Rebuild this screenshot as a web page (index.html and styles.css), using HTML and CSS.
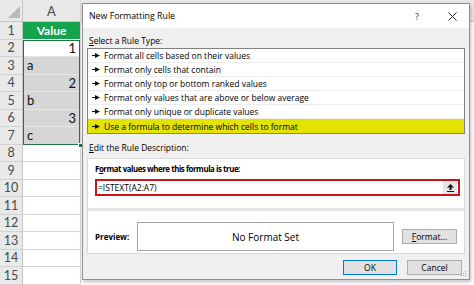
FILE: index.html
```html
<!DOCTYPE html>
<html lang="en">
<head>
    <meta charset="UTF-8">
    <title>New Formatting Rule</title>
    <link rel="stylesheet" href="styles.css">
</head>
<body>
    <div class="sheet">
        <div class="row-heads">
            <div class="corner"><span class="corner-tri"></span></div>
            <div class="rn">1</div>
            <div class="rn">2</div>
            <div class="rn">3</div>
            <div class="rn">4</div>
            <div class="rn">5</div>
            <div class="rn">6</div>
            <div class="rn">7</div>
            <div class="rn">8</div>
            <div class="rn">9</div>
            <div class="rn">10</div>
            <div class="rn">11</div>
            <div class="rn">12</div>
            <div class="rn">13</div>
            <div class="rn">14</div>
            <div class="rn">15</div>
        </div>

        <div class="col-a">
            <div class="col-head">A</div>
            <div class="cell head">Value</div>
            <div class="sel">
                <div class="cell num active">1</div>
                <div class="cell">a</div>
                <div class="cell num">2</div>
                <div class="cell">b</div>
                <div class="cell num">3</div>
                <div class="cell">c</div>
                <span class="handle"></span>
            </div>
            <div class="cell empty"></div>
            <div class="cell empty"></div>
            <div class="cell empty"></div>
            <div class="cell empty"></div>
            <div class="cell empty"></div>
            <div class="cell empty"></div>
            <div class="cell empty"></div>
            <div class="cell empty"></div>
        </div>

        <div class="col-b">
            <div class="col-head">B</div>
        </div>
    </div>

    <div class="dialog">
        <div class="titlebar">
            <span class="title">New Formatting Rule</span>
            <span class="help">?</span>
            <svg class="close" width="9" height="9" viewBox="0 0 9 9">
                <path d="M0.5 0.5L8.5 8.5M8.5 0.5L0.5 8.5" stroke="#222" stroke-width="1" fill="none"/>
            </svg>
        </div>

        <div class="dlg-body">
            <div class="label"><u>S</u>elect a Rule Type:</div>
            <ul class="rule-list">
                <li><svg class="arrow" width="8" height="5" viewBox="0 0 8 5"><path d="M0 2h3v1H0z M3 0l5 2.5L3 5z" fill="#111"/></svg>Format all cells based on their values</li>
                <li><svg class="arrow" width="8" height="5" viewBox="0 0 8 5"><path d="M0 2h3v1H0z M3 0l5 2.5L3 5z" fill="#111"/></svg>Format only cells that contain</li>
                <li><svg class="arrow" width="8" height="5" viewBox="0 0 8 5"><path d="M0 2h3v1H0z M3 0l5 2.5L3 5z" fill="#111"/></svg>Format only top or bottom ranked values</li>
                <li><svg class="arrow" width="8" height="5" viewBox="0 0 8 5"><path d="M0 2h3v1H0z M3 0l5 2.5L3 5z" fill="#111"/></svg>Format only values that are above or below average</li>
                <li><svg class="arrow" width="8" height="5" viewBox="0 0 8 5"><path d="M0 2h3v1H0z M3 0l5 2.5L3 5z" fill="#111"/></svg>Format only unique or duplicate values</li>
                <li class="picked"><svg class="arrow" width="8" height="5" viewBox="0 0 8 5"><path d="M0 2h3v1H0z M3 0l5 2.5L3 5z" fill="#111"/></svg>Use a formula to determine which cells to format</li>
            </ul>

            <div class="label label-edit"><u>E</u>dit the Rule Description:</div>
            <div class="desc">
                <div class="desc-top">
                    <div class="bold rule-label">F<u>o</u>rmat values where this formula is true:</div>
                    <div class="formula">
                        <span>=ISTEXT(A2:A7)</span>
                        <span class="collapse">
                            <svg width="7" height="8" viewBox="0 0 7 8">
                                <path d="M3.5 0L7 3.5H4.5V6h-2V3.5H0z M0 7h7v1H0z" fill="#111"/>
                            </svg>
                        </span>
                    </div>
                </div>
                <div class="desc-bottom">
                    <span class="bold preview-label">Preview:</span>
                    <div class="preview">No Format Set</div>
                    <button class="btn btn-format"><u>F</u>ormat...</button>
                </div>
            </div>

            <div class="actions">
                <button class="btn btn-ok">OK</button>
                <button class="btn btn-cancel">Cancel</button>
            </div>
        </div>

        <svg class="grip" width="6" height="6" viewBox="0 0 6 6">
            <rect x="4" y="0" width="1" height="1" fill="#aaa"/>
            <rect x="2" y="2" width="1" height="1" fill="#aaa"/>
            <rect x="4" y="2" width="1" height="1" fill="#aaa"/>
            <rect x="0" y="4" width="1" height="1" fill="#aaa"/>
            <rect x="2" y="4" width="1" height="1" fill="#aaa"/>
            <rect x="4" y="4" width="1" height="1" fill="#aaa"/>
        </svg>
    </div>
</body>
</html>
```

FILE: styles.css
```css
:root {
    --grid: #d6d6d6;
    --head-bg: #e9e9e9;
    --head-line: #c4c4c4;
    --xl-green: #14a44d;
    --sel-green: #217346;
    --dlg-bg: #f0f0f0;
    --btn-bg: #e1e1e1;
    --btn-line: #adadad;
    --pick: #e2e300;
    --red: #c8141e;
}

* {
    margin: 0;
    padding: 0;
    box-sizing: border-box;
}

body {
    width: 474px;
    height: 285px;
    overflow: hidden;
    background: #fff;
    position: relative;
    font-family: Lato, "Liberation Sans", sans-serif;
}

/* Hoja de calculo */
.sheet {
    display: flex;
    height: 285px;
}

.row-heads {
    width: 23px;
    background: var(--head-bg);
    border-right: 1px solid var(--head-line);
}

.corner {
    height: 22px;
    border-bottom: 1px solid var(--head-line);
    display: flex;
    justify-content: flex-end;
    align-items: flex-end;
    padding: 0 2px 3px 0;
}

.corner-tri {
    width: 0;
    height: 0;
    border-left: 12px solid transparent;
    border-bottom: 12px solid #b9b9b9;
}

.rn {
    height: 17.5px;
    border-bottom: 1px solid #d2d2d2;
    display: flex;
    align-items: center;
    justify-content: center;
    font-size: 12.5px;
    color: #4a4a4a;
}

.col-a {
    width: 58px;
    border-right: 1px solid var(--grid);
}

.col-head {
    height: 22px;
    background: var(--head-bg);
    border-bottom: 1px solid var(--head-line);
    display: flex;
    align-items: center;
    justify-content: center;
    font-size: 13px;
    color: #4a4a4a;
}

.cell {
    height: 17.5px;
    border-bottom: 1px solid #e6e6e6;
    display: flex;
    align-items: center;
    padding: 0 4px;
    font-size: 13px;
    color: #111;
    background: #d6d6d6;
}

.cell.num {
    justify-content: flex-end;
}

.cell.active {
    background: #fff;
}

.cell.head {
    background: var(--xl-green);
    color: #fff;
    font-weight: 700;
    font-size: 12px;
    justify-content: center;
    border-bottom: 1px solid #fff;
}

.cell.empty {
    background: #fff;
    border-bottom: 1px solid var(--grid);
}

.sel {
    position: relative;
    outline: 1.5px solid var(--sel-green);
    outline-offset: -1px;
}

.handle {
    position: absolute;
    right: -3px;
    bottom: -3px;
    width: 5px;
    height: 5px;
    background: var(--sel-green);
    border: 1px solid #fff;
}

.col-b {
    flex: 1;
}

/* Dialogo */
.dialog {
    position: absolute;
    left: 82px;
    top: 3px;
    width: 388px;
    height: 277px;
    background: var(--dlg-bg);
    border: 1px solid #8f8f8f;
    box-shadow: 1px 2px 4px rgba(0, 0, 0, 0.25);
    font-family: "Open Sans", sans-serif;
    font-size: 8.5px;
    color: #000;
    display: flex;
    flex-direction: column;
}

.titlebar {
    height: 24px;
    background: #fff;
    display: flex;
    align-items: center;
    padding-left: 6px;
}

.title {
    font-size: 8.8px;
}

.help {
    margin-left: auto;
    font-size: 9px;
    color: #333;
}

.close {
    margin: 0 12px 0 29px;
}

.dlg-body {
    flex: 1;
    padding: 0 4px;
    display: flex;
    flex-direction: column;
}

.label {
    margin-top: 6px;
    height: 13px;
    line-height: 13px;
    padding-left: 2px;
}

.label-edit {
    margin-top: 7px;
    height: 14px;
    line-height: 14px;
}

.rule-list {
    list-style: none;
    margin-top: 1px;
    height: 86px;
    background: #fff;
    border: 1px solid #828282;
}

.rule-list li {
    height: 14px;
    border-bottom: 1px solid #ededed;
    display: flex;
    align-items: center;
    padding-left: 4px;
    white-space: nowrap;
}

.rule-list li.picked {
    background: var(--pick);
    border-bottom: none;
}

.arrow {
    margin-right: 4px;
}

.desc {
    margin-top: 3px;
    height: 96px;
    background: #fff;
    border: 1px solid #d9d9d9;
    display: flex;
    flex-direction: column;
}

.bold {
    font-weight: 700;
}

.desc-top {
    height: 52px;
    padding: 4px 4px 0 7px;
    border-bottom: 3px solid #e4e4e4;
}

.rule-label {
    height: 12px;
    line-height: 12px;
    font-size: 7.9px;
    letter-spacing: -0.45px;
}

.formula {
    margin-top: 4px;
    height: 17px;
    border: 2px solid var(--red);
    display: flex;
    align-items: center;
    justify-content: space-between;
    padding: 0 1px 0 1px;
}

.collapse {
    width: 14px;
    height: 13px;
    background: #e6e6e6;
    display: flex;
    align-items: center;
    justify-content: center;
}

.desc-bottom {
    flex: 1;
    display: flex;
    align-items: flex-start;
    padding: 0 7px;
}

.preview-label {
    margin-top: 20px;
    width: 42px;
    font-size: 8px;
}

.preview {
    margin-top: 11px;
    width: 257px;
    height: 29px;
    border: 1px solid #a5a5a5;
    display: flex;
    align-items: center;
    justify-content: center;
    font-size: 10px;
}

.btn {
    font-family: "Open Sans", sans-serif;
    font-size: 8.5px;
    color: #000;
    background: var(--btn-bg);
    border: 1px solid var(--btn-line);
    height: 15px;
    display: flex;
    align-items: center;
    justify-content: center;
}

.btn-format {
    margin: 18px 0 0 8px;
    width: 55px;
}

.actions {
    margin-top: 6px;
    display: flex;
    justify-content: flex-end;
    gap: 10px;
    padding-right: 3px;
}

.btn-ok {
    width: 54px;
    border: 1.5px solid #0078d7;
}

.btn-cancel {
    width: 55px;
}

.grip {
    position: absolute;
    right: 2px;
    bottom: 2px;
}
```
